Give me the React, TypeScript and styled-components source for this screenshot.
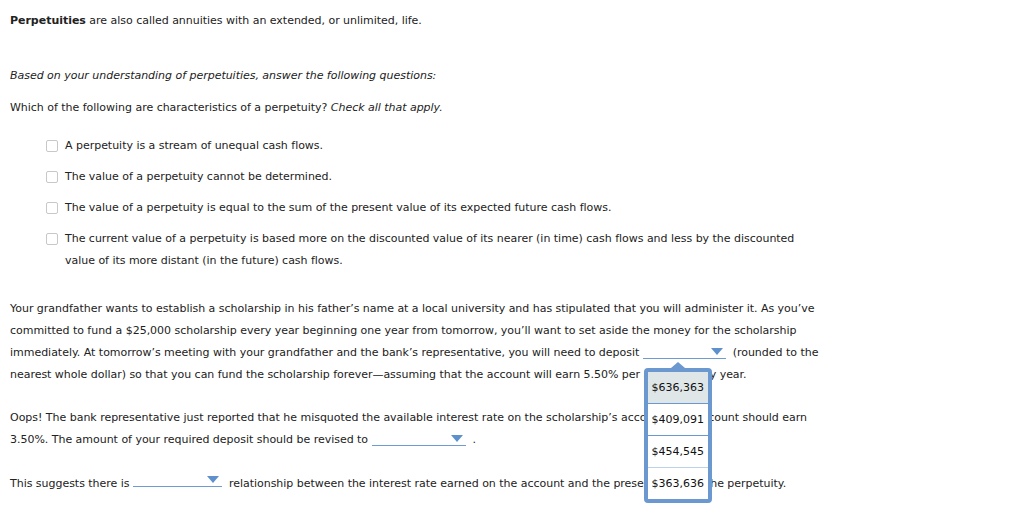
import React from 'react';
import styled, { createGlobalStyle } from 'styled-components';

const GlobalStyle = createGlobalStyle`
  html, body {
    margin: 0;
    padding: 0;
    background: #ffffff;
  }
  body {
    font-family: "DejaVu Sans", Verdana, sans-serif;
    font-size: 11px;
    color: #222222;
  }
`;

const Page = styled.div`
  min-height: 513px;
  box-sizing: border-box;
  padding: 10px 10px 0 10px;
  line-height: 22px;
  letter-spacing: -0.025px;
  white-space: nowrap;
`;

const Para = styled.p<{ $top?: number }>`
  margin: ${p => p.$top ?? 0}px 0 0 0;
`;

const Options = styled.div`
  margin: 16px 0 0 36px;
  display: flex;
  flex-direction: column;
  gap: 9px;
`;

const Option = styled.label`
  display: flex;
  align-items: flex-start;
  gap: 7px;
`;

const Box = styled.span`
  flex-shrink: 0;
  width: 10px;
  height: 10px;
  margin-top: 5px;
  border: 1px solid #c8c8c8;
  border-radius: 2px;
  background: #fff;
`;

const Dropdown = styled.span<{ $w: number }>`
  position: relative;
  display: inline-block;
  vertical-align: -3px;
  width: ${p => p.$w}px;
  height: 14px;
  border-bottom: 1px solid #6f9bd1;
  &::after {
    content: '';
    position: absolute;
    right: 3px;
    top: 4px;
    border-left: 6px solid transparent;
    border-right: 6px solid transparent;
    border-top: 7px solid #5e90cc;
  }
`;

const Popup = styled.div`
  position: absolute;
  left: 1px;
  top: 24px;
  width: 60px;
  border: 4px solid #6a98cf;
  border-radius: 4px;
  background: #fff;
  z-index: 2;
  line-height: normal;
  letter-spacing: 0;
  &::before {
    content: '';
    position: absolute;
    left: 23px;
    top: -10px;
    border-left: 7px solid transparent;
    border-right: 7px solid transparent;
    border-bottom: 6px solid #6a98cf;
  }
`;

const Item = styled.div<{ $hover?: boolean; $soft?: boolean }>`
  height: 31px;
  display: flex;
  align-items: center;
  justify-content: center;
  background: ${p => (p.$hover ? '#dfe6e8' : '#fff')};
  border-top: 1px solid ${p => (p.$soft ? '#bcd1ea' : '#6a98cf')};
  color: #111;
  &:first-child {
    border-top: none;
  }
`;

const Sentence = styled.div`
  display: flex;
  align-items: baseline;
`;

export default function App() {
  return (
    <Page>
      <GlobalStyle />
      <Para>
        <b>Perpetuities</b> are also called annuities with an extended, or unlimited, life.
      </Para>
      <Para $top={33}>
        <i>Based on your understanding of perpetuities, answer the following questions:</i>
      </Para>
      <Para $top={10}>
        Which of the following are characteristics of a perpetuity? <i>Check all that apply.</i>
      </Para>

      <Options>
        <Option>
          <Box />
          <span>A perpetuity is a stream of unequal cash flows.</span>
        </Option>
        <Option>
          <Box />
          <span>The value of a perpetuity cannot be determined.</span>
        </Option>
        <Option>
          <Box />
          <span>The value of a perpetuity is equal to the sum of the present value of its expected future cash flows.</span>
        </Option>
        <Option>
          <Box />
          <span>
            The current value of a perpetuity is based more on the discounted value of its nearer (in time) cash flows and less by the discounted
            <br />
            value of its more distant (in the future) cash flows.
          </span>
        </Option>
      </Options>

      <Para $top={26}>
        Your grandfather wants to establish a scholarship in his father’s name at a local university and has stipulated that you will administer it. As you’ve
        <br />
        committed to fund a $25,000 scholarship every year beginning one year from tomorrow, you’ll want to set aside the money for the scholarship
        <br />
        immediately. At tomorrow’s meeting with your grandfather and the bank’s representative, you will need to deposit{' '}
        <Dropdown $w={83}>
          <Popup>
            <Item $hover>$636,363</Item>
            <Item>$409,091</Item>
            <Item>$454,545</Item>
            <Item $soft>$363,636</Item>
          </Popup>
        </Dropdown>
        {'   '}&nbsp;(rounded to the
        <br />
        nearest whole dollar) so that you can fund the scholarship forever—assuming that the account will earn 5.50% per annum every year.
      </Para>

      <Para $top={21}>
        Oops! The bank representative just reported that he misquoted the available interest rate on the scholarship’s account. The account should earn
        <br />
        3.50%. The amount of your required deposit should be revised to <Dropdown $w={94} /> &nbsp;.
      </Para>

      <Para $top={21}>
        <Sentence>
          This suggests there is&nbsp;<Dropdown $w={89} />&nbsp; relationship between the interest rate earned on the account and the present value of the perpetuity.
        </Sentence>
      </Para>
    </Page>
  );
}
